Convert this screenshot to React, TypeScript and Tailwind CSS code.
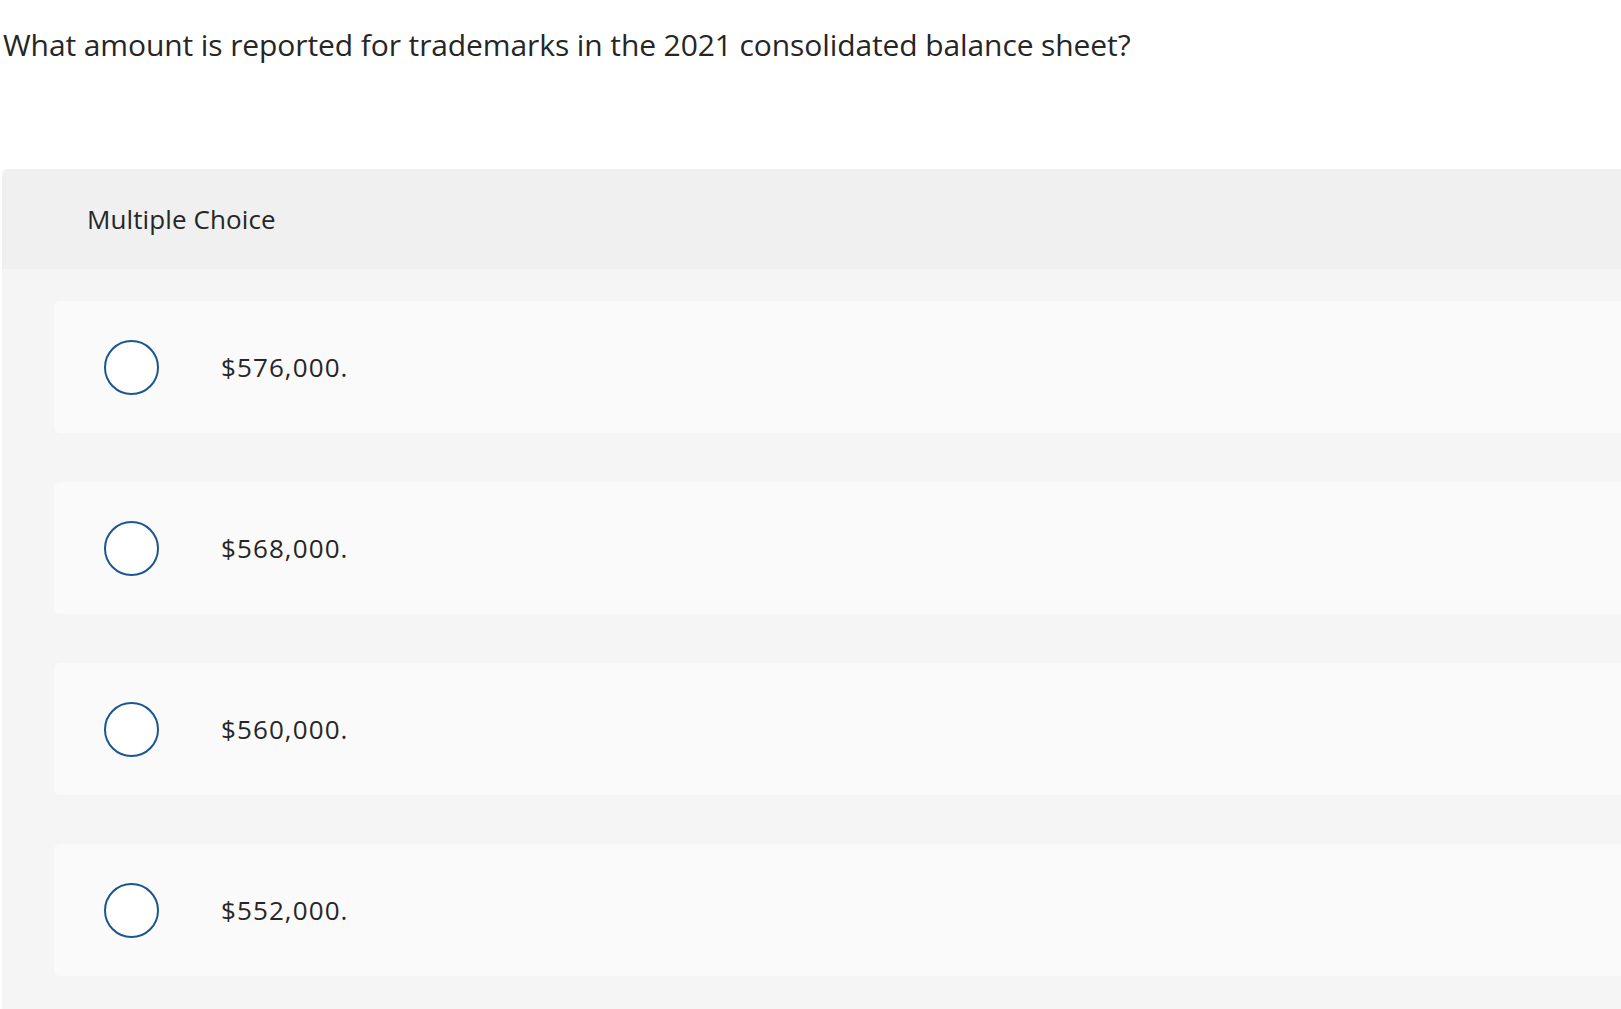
import React from "react";

const options = ["$576,000.", "$568,000.", "$560,000.", "$552,000."];

export default function App() {
  return (
    <div
      className="w-[1621px] h-[1009px] overflow-hidden bg-white text-[#262626]"
      style={{ fontFamily: '"Open Sans", "Liberation Sans", sans-serif' }}
    >
      <div className="h-[169px] pl-[3px] pt-[24px]">
        <p className="text-[30px] leading-[42px] tracking-[-0.1px]">
          What amount is reported for trademarks in the 2021 consolidated balance sheet?
        </p>
      </div>
      <div className="ml-[2px] w-[1700px] rounded-tl-[6px] bg-[#f5f5f5]">
        <div className="flex h-[100px] items-center rounded-tl-[6px] bg-[#f0f0f0] pl-[85px]">
          <span className="text-[26px] leading-[32px] tracking-[0.1px]">Multiple Choice</span>
        </div>
        <div className="flex flex-col gap-[49px] pl-[52px] pt-[32px] pb-[40px]">
          {options.map((o) => (
            <div
              key={o}
              className="flex h-[132px] items-center rounded-[6px] bg-[#fafafa] pl-[50px]"
            >
              <span className="block h-[55px] w-[55px] shrink-0 rounded-full border-[2.5px] border-[#1c5690] bg-white" />
              <span className="ml-[62px] text-[26px] leading-[32px] tracking-[1.1px]">{o}</span>
            </div>
          ))}
        </div>
      </div>
    </div>
  );
}
